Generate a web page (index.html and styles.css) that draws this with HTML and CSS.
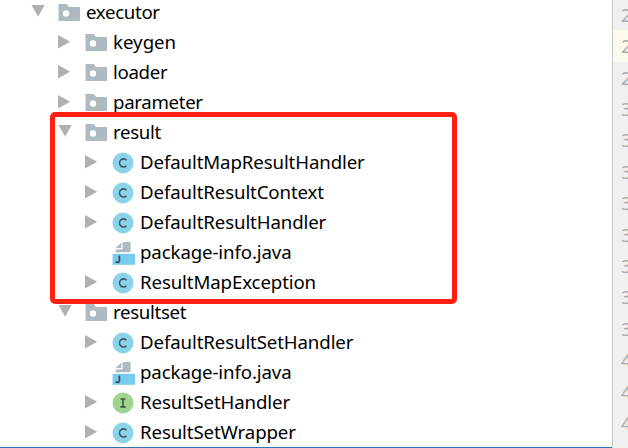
FILE: index.html
```
<!DOCTYPE html>
<html lang="en">
<head>
<meta charset="utf-8">
<title>Project tree</title>
<link rel="stylesheet" href="styles.css">
</head>
<body>
<svg width="0" height="0" class="defs">
  <symbol id="open" viewBox="0 0 14 30"><path d="M0.5 8H13.7L7.1 19.7Z" fill="#b0b0b0"/></symbol>
  <symbol id="closed" viewBox="0 0 14 30"><path d="M0 8V21.4L12.2 14.7Z" fill="#b0b0b0"/></symbol>
  <symbol id="folder" viewBox="0 0 24 30"><path fill-rule="evenodd" d="M0.5 7H8.8L11 10H22V24H0.5ZM8 13.3a3.2 3.2 0 1 0 0 6.4a3.2 3.2 0 1 0 0-6.4Z" fill="#aeb9c0"/></symbol>
  <symbol id="class" viewBox="0 0 24 30"><circle cx="11" cy="15.9" r="10.5" fill="#8bd3eb"/><path d="M14.4 13.2A3.9 4.1 0 1 0 14.4 18.7" fill="none" stroke="#3e5661" stroke-width="1.6"/></symbol>
  <symbol id="interface" viewBox="0 0 24 30"><circle cx="11" cy="15.9" r="10.5" fill="#a0d38e"/><path d="M8.4 12H13.6M8.4 19.9H13.6M11 12V19.9" fill="none" stroke="#405842" stroke-width="1.6"/></symbol>
  <symbol id="java" viewBox="0 0 24 30"><path d="M10.6 5H18.6V15.3H3.7V12.4H10.6Z" fill="#aeb9c0"/><path d="M9.3 5.5V11.1H3.7Z" fill="#aeb9c0"/><path d="M0.6 16.8H23V27.8H0.6Z" fill="#78cbea"/><path d="M7.4 18.6V23.5Q7.4 25.4 5.6 25.4Q4.5 25.4 3.7 24.6" fill="none" stroke="#34505d" stroke-width="1.7"/></symbol>
</svg>
<div class="window">
  <main class="tree">
    <div class="row l0"><svg class="arrow"><use href="#open"/></svg><svg class="icon"><use href="#folder"/></svg><span>executor</span></div>
    <div class="row l1"><svg class="arrow"><use href="#closed"/></svg><svg class="icon"><use href="#folder"/></svg><span class="wide">keygen</span></div>
    <div class="row l1"><svg class="arrow"><use href="#closed"/></svg><svg class="icon"><use href="#folder"/></svg><span>loader</span></div>
    <div class="row l1"><svg class="arrow"><use href="#closed"/></svg><svg class="icon"><use href="#folder"/></svg><span>parameter</span></div>
    <div class="row l1"><svg class="arrow"><use href="#open"/></svg><svg class="icon"><use href="#folder"/></svg><span>result</span></div>
    <div class="row l2"><svg class="arrow"><use href="#closed"/></svg><svg class="icon"><use href="#class"/></svg><span>DefaultMapResultHandler</span></div>
    <div class="row l2"><svg class="arrow"><use href="#closed"/></svg><svg class="icon"><use href="#class"/></svg><span>DefaultResultContext</span></div>
    <div class="row l2"><svg class="arrow"><use href="#closed"/></svg><svg class="icon"><use href="#class"/></svg><span>DefaultResultHandler</span></div>
    <div class="row l2"><svg class="arrow"></svg><svg class="icon"><use href="#java"/></svg><span>package-info.java</span></div>
    <div class="row l2"><svg class="arrow"><use href="#closed"/></svg><svg class="icon"><use href="#class"/></svg><span>ResultMapException</span></div>
    <div class="row l1"><svg class="arrow"><use href="#open"/></svg><svg class="icon"><use href="#folder"/></svg><span>resultset</span></div>
    <div class="row l2"><svg class="arrow"><use href="#closed"/></svg><svg class="icon"><use href="#class"/></svg><span>DefaultResultSetHandler</span></div>
    <div class="row l2"><svg class="arrow"></svg><svg class="icon"><use href="#java"/></svg><span>package-info.java</span></div>
    <div class="row l2"><svg class="arrow"><use href="#closed"/></svg><svg class="icon"><use href="#interface"/></svg><span>ResultSetHandler</span></div>
    <div class="row l2"><svg class="arrow"><use href="#closed"/></svg><svg class="icon"><use href="#class"/></svg><span>ResultSetWrapper</span></div>
  </main>
  <aside class="gutter">
    <div>2</div><div class="current">2</div><div>2</div><div>3</div><div>3</div><div>3</div><div>3</div><div>3</div><div>3</div><div>3</div><div>3</div><div>4</div><div>4</div><div>4</div>
  </aside>
  <div class="highlight"></div>
</div>
</body>
</html>
```
FILE: styles.css
```
body { margin: 0; background: #fff; }
.defs { display: block; }
.window {
  position: relative;
  display: flex;
  width: 628px;
  height: 448px;
  overflow: hidden;
}
.tree {
  box-sizing: border-box;
  width: 612px;
  height: 448px;
  overflow: hidden;
  border-bottom: 1px solid #2f74b5;
  font: 18.67px/30px "Noto Sans", sans-serif;
  color: #000;
}
.row { display: flex; height: 30px; white-space: nowrap; }
.row:first-child { margin-top: -3px; }
.l0 { padding-left: 31px; }
.l1 { padding-left: 58px; }
.l2 { padding-left: 85px; }
.arrow { width: 14px; height: 30px; flex: none; }
.icon { width: 24px; height: 30px; margin-left: 13px; flex: none; }
.row span { margin-left: 4px; letter-spacing: -0.33px; }
.row .wide { letter-spacing: 0; }
.l2 span { letter-spacing: -0.12px; }
.row.l2 span { letter-spacing: -0.12px; }
.gutter {
  box-sizing: border-box;
  width: 16px;
  height: 448px;
  overflow: hidden;
  border-left: 1px solid #c8c8c8;
  background: #f0f0f0;
  color: #aaa;
  font: 18.67px/31.4px "Noto Sans", sans-serif;
}
.gutter div { height: 31.4px; padding-left: 8px; }
.gutter div:first-child { margin-top: -1.2px; }
.gutter .current { background: #fcfaed; }
.highlight {
  position: absolute;
  box-sizing: border-box;
  left: 50px;
  top: 112px;
  width: 407px;
  height: 192px;
  border: 5px solid #ff2014;
  border-radius: 5px;
}
```
